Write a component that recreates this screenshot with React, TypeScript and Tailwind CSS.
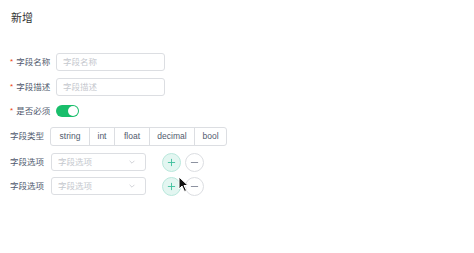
import React from "react";

const Req = ({ text }: { text: string }) => (
  <div className="w-[46px] flex items-center shrink-0">
    <span className="text-[#ed4014] text-[8px] mr-[3px] leading-none">*</span>
    <span>{text}</span>
  </div>
);

const OptionRow = () => (
  <div className="flex items-center h-[18px]">
    <div className="w-[41px] shrink-0">字段选项</div>
    <div className="w-[95px] h-[18px] border border-[#dcdee2] rounded-[3px] flex items-center justify-between px-[6px] text-[#c5c8ce]">
      <span>字段选项</span>
      <svg width="8" height="8" viewBox="0 0 10 10" className="mr-[3px]">
        <path d="M2 3.5 L5 6.5 L8 3.5" fill="none" stroke="#c5c8ce" strokeWidth="1" />
      </svg>
    </div>
    <div className="ml-[16px] w-[19px] h-[19px] rounded-full border border-[#b9e8dc] bg-[#e3f6f1] flex items-center justify-center">
      <svg width="9" height="9" viewBox="0 0 10 10">
        <path d="M5 1 V9 M1 5 H9" stroke="#3cbf9c" strokeWidth="1" />
      </svg>
    </div>
    <div className="ml-[4px] w-[19px] h-[19px] rounded-full border border-[#dcdee2] bg-white flex items-center justify-center">
      <svg width="9" height="9" viewBox="0 0 10 10">
        <path d="M1 5 H9" stroke="#808695" strokeWidth="1" />
      </svg>
    </div>
  </div>
);

const types = [
  { t: "string", w: "w-[38px]" },
  { t: "int", w: "w-[25px]" },
  { t: "float", w: "w-[35px]" },
  { t: "decimal", w: "w-[45px]" },
  { t: "bool", w: "w-[32px]" },
];

export default function App() {
  return (
    <div
      className="w-[474px] h-[253px] bg-white relative text-[8.5px] text-[#515a6e]"
      style={{ fontFamily: '"Liberation Sans", "Noto Sans CJK SC", sans-serif' }}
    >
      <div className="pt-[11px] pl-[11px] text-[11px] leading-[14px] text-[#333]">新增</div>
      <div className="pl-[10px] mt-[28px] flex flex-col">
        <div className="flex items-center h-[18px]">
          <Req text="字段名称" />
          <div className="w-[109px] h-[18px] border border-[#dcdee2] rounded-[3px] flex items-center px-[6px] text-[#c5c8ce]">字段名称</div>
        </div>
        <div className="flex items-center h-[18px] mt-[7px]">
          <Req text="字段描述" />
          <div className="w-[109px] h-[18px] border border-[#dcdee2] rounded-[3px] flex items-center px-[6px] text-[#c5c8ce]">字段描述</div>
        </div>
        <div className="flex items-center h-[18px] mt-[6px]">
          <Req text="是否必须" />
          <div className="w-[23px] h-[12px] rounded-full bg-[#19be6b] flex items-center justify-end pr-[1px]">
            <div className="w-[10px] h-[10px] rounded-full bg-white" />
          </div>
        </div>
        <div className="flex items-center h-[19px] mt-[7px]">
          <div className="w-[40px] shrink-0">字段类型</div>
          <div className="flex h-[19px] border border-[#dcdee2] rounded-[3px]">
            {types.map((x, i) => (
              <div
                key={x.t}
                className={`${x.w} flex items-center justify-center ${i > 0 ? "border-l border-[#dcdee2]" : ""}`}
              >
                {x.t}
              </div>
            ))}
          </div>
        </div>
        <div className="mt-[7px]">
          <OptionRow />
        </div>
        <div className="mt-[6px]">
          <OptionRow />
        </div>
      </div>
      <svg className="absolute left-[178px] top-[176px]" width="12" height="17" viewBox="0 0 12 17">
        <path d="M1 1 L1 13 L4 10 L6.5 15.5 L8.5 14.5 L6 9.5 L10 9.5 Z" fill="#111" stroke="#fff" strokeWidth="1" />
      </svg>
    </div>
  );
}
